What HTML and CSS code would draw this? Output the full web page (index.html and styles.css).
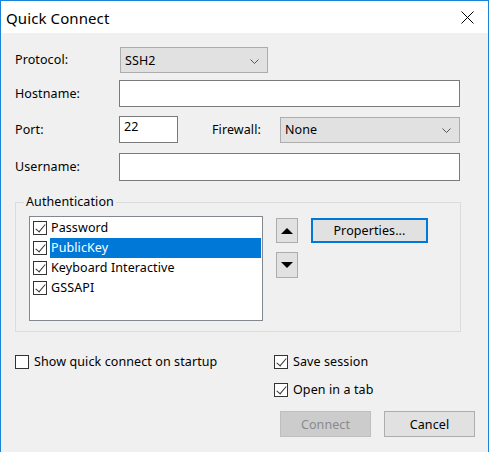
FILE: index.html
```html
<!DOCTYPE html>
<html lang="en">
<head>
  <meta charset="UTF-8" />
  <title>Quick Connect</title>
  <link rel="stylesheet" href="styles.css">
</head>
<body>
  <div class="window">
    <div class="titlebar">
      <span class="title">Quick Connect</span>
      <svg class="close" width="13" height="13" viewBox="0 0 13 13">
        <path d="M0.5 0.5 L12.5 12.5 M12.5 0.5 L0.5 12.5" stroke="#000" stroke-width="1" fill="none"/>
      </svg>
    </div>

    <div class="content">
      <div class="row row-protocol">
        <label class="label">Protocol:</label>
        <div class="select select-protocol">
          <span>SSH2</span>
          <svg class="chevron" width="9" height="5" viewBox="0 0 9 5"><path d="M0.5 0.5 L4.5 4.5 L8.5 0.5" stroke="#555" fill="none"/></svg>
        </div>
      </div>

      <div class="row row-host">
        <label class="label">Hostname:</label>
        <div class="input input-wide"></div>
      </div>

      <div class="row row-port">
        <label class="label">Port:</label>
        <div class="input input-port">22</div>
        <label class="label-firewall">Firewall:</label>
        <div class="select select-firewall">
          <span>None</span>
          <svg class="chevron" width="9" height="5" viewBox="0 0 9 5"><path d="M0.5 0.5 L4.5 4.5 L8.5 0.5" stroke="#555" fill="none"/></svg>
        </div>
      </div>

      <div class="row row-user">
        <label class="label">Username:</label>
        <div class="input input-wide"></div>
      </div>

      <fieldset class="group">
        <legend>Authentication</legend>
        <div class="auth-body">
          <div class="listbox">
            <div class="item">
              <span class="check on"></span><span class="item-text">Password</span>
            </div>
            <div class="item">
              <span class="check on"></span><span class="item-text selected">PublicKey</span>
            </div>
            <div class="item">
              <span class="check on"></span><span class="item-text">Keyboard Interactive</span>
            </div>
            <div class="item">
              <span class="check on"></span><span class="item-text">GSSAPI</span>
            </div>
          </div>

          <div class="arrows">
            <button class="arrow-btn"><span class="tri-up"></span></button>
            <button class="arrow-btn"><span class="tri-down"></span></button>
          </div>

          <button class="btn btn-default btn-props">Properties...</button>
        </div>
      </fieldset>

      <div class="options">
        <div class="option"><span class="check"></span>Show quick connect on startup</div>
        <div class="option"><span class="check on"></span>Save session</div>
        <div class="option option-tab"><span class="check on"></span>Open in a tab</div>
      </div>

      <div class="actions">
        <button class="btn btn-disabled">Connect</button>
        <button class="btn">Cancel</button>
      </div>
    </div>
  </div>
</body>
</html>
```

FILE: styles.css
```css
* {
  box-sizing: border-box;
}

body {
  margin: 0;
  font-family: "Noto Sans", "Liberation Sans", sans-serif;
  font-size: 12.5px;
  letter-spacing: 0.1px;
  line-height: 16px;
  color: #000;
}

.window {
  width: 489px;
  height: 452px;
  border: 1px solid #1883d7;
  border-bottom: none;
  background: #f0f0f0;
  display: flex;
  flex-direction: column;
}

.titlebar {
  height: 32px;
  background: #fff;
  display: flex;
  align-items: center;
  padding-left: 5px;
  flex-shrink: 0;
}

.title {
  font-size: 15px;
  letter-spacing: 0.1px;
  flex: 1;
  padding-top: 1px;
}

.close {
  margin-right: 14px;
  margin-top: 1px;
}

.content {
  padding: 14px 13px 0 14px;
}

.row {
  display: flex;
  align-items: center;
}

.row-host {
  margin-top: 7px;
}

.row-port {
  margin-top: 9px;
}

.row-user {
  margin-top: 10px;
}

.label {
  width: 104px;
  flex-shrink: 0;
}

.input {
  background: #fff;
  border: 1px solid #7a7a7a;
  height: 27px;
  padding: 2px 4px;
}

.input-wide {
  width: 341px;
}

.row-user .input-wide {
  height: 28px;
}

.input-port {
  width: 59px;
}

.label-firewall {
  margin-left: 34px;
  width: 68px;
}

.select {
  background: #e1e1e1;
  border: 1px solid #adadad;
  height: 26px;
  display: flex;
  align-items: center;
  padding: 1px 8px 0 4px;
}

.select span {
  flex: 1;
}

.select-protocol {
  width: 148px;
  margin-left: 1px;
}

.select-firewall {
  width: 180px;
}

.chevron {
  margin-top: 1px;
}

.group {
  margin: 13px 0 0 0;
  width: 446px;
  border: 1px solid #dcdcdc;
  padding: 0;
}

.group legend {
  margin-left: 8px;
  padding: 0 2px;
  line-height: 16px;
}

.auth-body {
  display: flex;
  align-items: flex-start;
  padding: 6px 13px 10px 13px;
}

.listbox {
  width: 234px;
  height: 105px;
  background: #fff;
  border: 1px solid #828790;
  padding: 1px 1px 0 3px;
}

.item {
  height: 20px;
  display: flex;
  align-items: center;
}

.item-text {
  flex: 1;
  margin-left: 3px;
  padding-left: 1px;
  height: 20px;
  line-height: 20px;
}

.item-text.selected {
  background: #0078d7;
  color: #fff;
}

.check {
  width: 14px;
  height: 14px;
  border: 1px solid #333;
  background: #fff;
  flex-shrink: 0;
  position: relative;
}

.check.on::after {
  content: "";
  position: absolute;
  left: 4px;
  top: 0px;
  width: 4px;
  height: 9px;
  border-right: 1px solid #333;
  border-bottom: 1px solid #333;
  transform: rotate(40deg);
}

.arrows {
  display: flex;
  flex-direction: column;
  gap: 9px;
  margin: 2px 0 0 13px;
}

.arrow-btn {
  width: 22px;
  height: 25px;
  background: #e1e1e1;
  border: 1px solid #adadad;
  padding: 0;
  display: flex;
  align-items: center;
  justify-content: center;
}

.arrow-btn + .arrow-btn {
  height: 26px;
}

.tri-up {
  width: 0;
  height: 0;
  border-left: 6px solid transparent;
  border-right: 6px solid transparent;
  border-bottom: 6px solid #000;
}

.tri-down {
  width: 0;
  height: 0;
  border-left: 6px solid transparent;
  border-right: 6px solid transparent;
  border-top: 6px solid #000;
}

.btn {
  font-family: inherit;
  font-size: 12.5px;
  letter-spacing: 0.1px;
  color: #000;
  background: #e1e1e1;
  border: 1px solid #adadad;
  width: 91px;
  height: 26px;
  padding: 0;
}

.btn-default {
  border: 2px solid #0078d7;
}

.btn-props {
  width: 117px;
  height: 25px;
  margin: 2px 0 0 13px;
}

.btn-disabled {
  background: #cccccc;
  border-color: #bfbfbf;
  color: #8a8a8a;
}

.options {
  display: grid;
  grid-template-columns: 259px 1fr;
  row-gap: 12px;
  margin-top: 22px;
}

.option {
  display: flex;
  align-items: center;
  height: 16px;
  gap: 5px;
}

.option-tab {
  grid-column: 2;
}

.actions {
  display: flex;
  justify-content: flex-end;
  gap: 13px;
  margin-top: 13px;
}
```
